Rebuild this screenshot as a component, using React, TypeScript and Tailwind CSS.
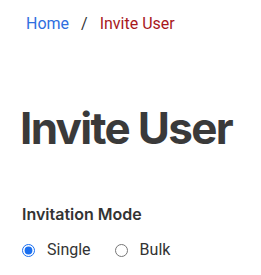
export default function App() {
  return (
    <div className="min-h-screen bg-white px-5 font-['Inter',sans-serif]">
      {/* Breadcrumb */}
      <nav className="flex items-center gap-3 pl-1.5 pt-3 font-['Roboto',sans-serif] text-[16px]">
        <span className="text-[#2f6fe0]">Home</span>
        <span className="text-[#333]">/</span>
        <span className="text-[#a8171c]">Invite User</span>
      </nav>

      <h1 className="mt-[70px] whitespace-nowrap text-[44px] font-bold leading-none tracking-[-1.7px] text-[#3a3a3a]">Invite User</h1>

      <div className="mt-[52px]">
        <p className="pl-0.5 text-[16px] font-semibold text-[#333]">Invitation Mode</p>
        <div className="mt-3 flex items-center gap-6 pl-0.5 font-['Roboto',sans-serif] text-[16px] text-[#333]">
          <label className="flex items-center gap-3">
            <input type="radio" name="mode" defaultChecked className="h-[13px] w-[13px] accent-[#1a6ff0]" />
            Single
          </label>
          <label className="flex items-center gap-3">
            <input type="radio" name="mode" className="h-[13px] w-[13px]" />
            Bulk
          </label>
        </div>
      </div>
    </div>
  );
}
